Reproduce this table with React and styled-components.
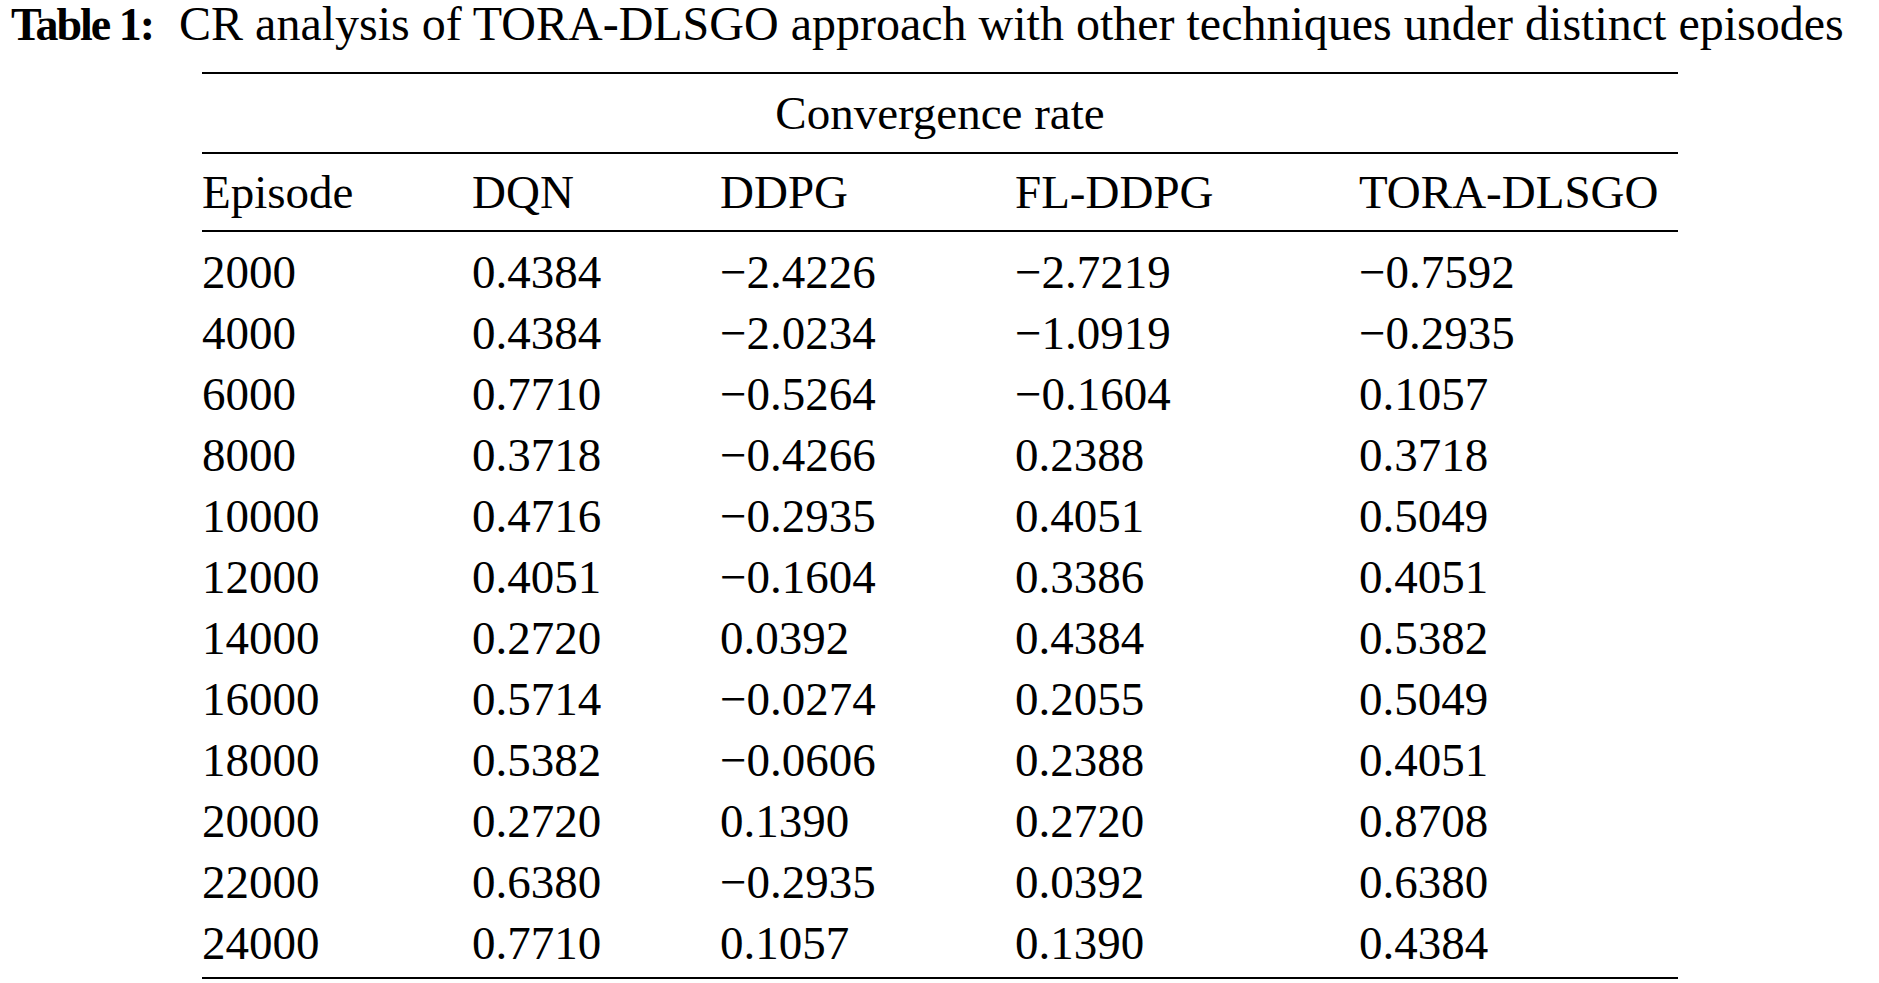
import React from 'react'
import styled, { createGlobalStyle } from 'styled-components'

const GlobalStyle = createGlobalStyle`
  html, body {
    margin: 0;
    padding: 0;
    background: #fff;
  }
  body {
    font-family: 'Liberation Serif', 'Times New Roman', serif;
    color: #000;
  }
`

const Page = styled.div`
  padding-left: 11px;
`

const Caption = styled.div`
  font-size: 48px;
  line-height: 48px;
  white-space: nowrap;
`

const CaptionLabel = styled.span`
  font-weight: 700;
  font-size: 46px;
  letter-spacing: -2px;
  margin-right: 26px;
`

const Table = styled.div`
  margin: 23px 0 0 191px;
  width: 1476px;
  font-size: 47px;
  line-height: 47px;
`

const columns = '270px 248px 295px 344px 319px'

const SpanRow = styled.div`
  height: 78px;
  display: flex;
  align-items: center;
  justify-content: center;
  border-top: 2px solid #000;
  border-bottom: 2px solid #000;
`

const HeadRow = styled.div`
  display: grid;
  grid-template-columns: ${columns};
  align-items: center;
  height: 76px;
  border-bottom: 2px solid #000;
`

const Body = styled.div`
  padding: 10px 0 3px;
  border-bottom: 2px solid #000;
`

const Row = styled.div`
  display: grid;
  grid-template-columns: ${columns};
  align-items: center;
  height: 61px;
`

const Cell = styled.div`
  white-space: nowrap;
`

const headers = ['Episode', 'DQN', 'DDPG', 'FL-DDPG', 'TORA-DLSGO']

const rows = [
  ['2000', '0.4384', '−2.4226', '−2.7219', '−0.7592'],
  ['4000', '0.4384', '−2.0234', '−1.0919', '−0.2935'],
  ['6000', '0.7710', '−0.5264', '−0.1604', '0.1057'],
  ['8000', '0.3718', '−0.4266', '0.2388', '0.3718'],
  ['10000', '0.4716', '−0.2935', '0.4051', '0.5049'],
  ['12000', '0.4051', '−0.1604', '0.3386', '0.4051'],
  ['14000', '0.2720', '0.0392', '0.4384', '0.5382'],
  ['16000', '0.5714', '−0.0274', '0.2055', '0.5049'],
  ['18000', '0.5382', '−0.0606', '0.2388', '0.4051'],
  ['20000', '0.2720', '0.1390', '0.2720', '0.8708'],
  ['22000', '0.6380', '−0.2935', '0.0392', '0.6380'],
  ['24000', '0.7710', '0.1057', '0.1390', '0.4384'],
]

const App = () => (
  <Page>
    <GlobalStyle />
    <Caption>
      <CaptionLabel>Table 1:</CaptionLabel>
      CR analysis of TORA-DLSGO approach with other techniques under distinct episodes
    </Caption>
    <Table>
      <SpanRow>Convergence rate</SpanRow>
      <HeadRow>
        {headers.map(h => (
          <Cell key={h}>{h}</Cell>
        ))}
      </HeadRow>
      <Body>
        {rows.map(r => (
          <Row key={r[0]}>
            {r.map((v, i) => (
              <Cell key={i}>{v}</Cell>
            ))}
          </Row>
        ))}
      </Body>
    </Table>
  </Page>
)

export default App
